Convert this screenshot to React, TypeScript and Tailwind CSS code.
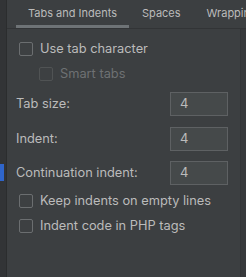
import React from "react";

function Check({ label, dim = false, indent = false }: { label: string; dim?: boolean; indent?: boolean }) {
  return (
    <div className={`flex items-center h-[24px] ${indent ? "pl-[32px]" : "pl-[12px]"}`}>
      <div className={`w-[14px] h-[14px] border ${dim ? "border-[#505354]" : "border-[#6b6e70]"} rounded-[2px] bg-[#3d4042]`} />
      <span className={`ml-[7px] text-[12.8px] ${dim ? "text-[#6e7173]" : "text-[#bbbbbb]"}`}>{label}</span>
    </div>
  );
}

function Field({ label, value }: { label: string; value: string }) {
  return (
    <div className="flex items-center h-[24px] pl-[9px] pr-[12px]">
      <span className="text-[12.8px] text-[#bbbbbb] flex-1">{label}</span>
      <div className="w-[58px] h-[24px] border border-[#5e6163] bg-[#45494a] flex items-center pl-[9px] text-[13px] text-[#bbbbbb]">
        {value}
      </div>
    </div>
  );
}

export default function App() {
  return (
    <div
      className="w-[246px] h-[277px] flex bg-[#3c3f41] overflow-hidden"
      style={{ fontFamily: "Inter, 'Noto Sans', sans-serif" }}
    >
      <div className="w-[7px] shrink-0 bg-[#323436] border-r border-[#2b2d2e] flex flex-col">
        <div className="mt-[164px] w-[4px] h-[17px] bg-[#2f65ca]" />
      </div>
      <div className="flex-1 flex flex-col min-w-0">
        <div className="h-[29px] shrink-0 flex items-stretch border-b border-[#323436] text-[11px] text-[#bbbbbb] whitespace-nowrap overflow-hidden">
          <div className="ml-[9px] w-[113px] shrink-0 flex items-center justify-center relative pb-[1px]">
            Tabs and Indents
            <div className="absolute left-0 right-0 bottom-0 h-[3px] bg-[#6e7376]" />
          </div>
          <div className="ml-[13px] shrink-0 flex items-center pb-[1px]">Spaces</div>
          <div className="ml-[26px] shrink-0 flex items-center pb-[1px]">Wrapping</div>
        </div>
        <div className="flex-1 flex min-h-0">
          <div className="flex-1 flex flex-col pt-[8px]">
            <Check label="Use tab character" />
            <div className="h-[1px]" />
            <Check label="Smart tabs" dim indent />
            <div className="h-[6px]" />
            <Field label="Tab size:" value="4" />
            <div className="h-[11px]" />
            <Field label="Indent:" value="4" />
            <div className="h-[10px]" />
            <Field label="Continuation indent:" value="4" />
            <div className="h-[4px]" />
            <Check label="Keep indents on empty lines" />
            <div className="h-[1px]" />
            <Check label="Indent code in PHP tags" />
          </div>
          <div className="w-[6px] shrink-0 bg-[#37393b] border-l border-[#333537]" />
        </div>
      </div>
    </div>
  );
}
